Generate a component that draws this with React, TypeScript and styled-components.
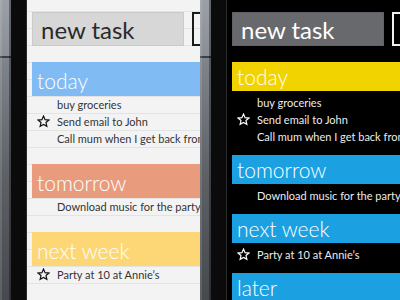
import React from 'react';
import styled, { createGlobalStyle } from 'styled-components';

const GlobalStyle = createGlobalStyle`
  html, body {
    margin: 0;
    padding: 0;
    width: 400px;
    height: 300px;
    overflow: hidden;
    background: #000;
  }
  * { box-sizing: border-box; }
`;

interface Theme {
  screen: string;
  lines: boolean;
  input: string;
  inputText: string;
  addBorder: string;
  text: string;
  star: string;
  headerHeight: number;
  headerGap: number;
  sectionGap: number;
  headerTop: number;
}

const light: Theme = {
  screen: '#f3f3f3',
  lines: true,
  input: '#d7d7d7',
  inputText: '#2a2a2a',
  addBorder: '#1a1a1a',
  text: '#333',
  star: '#111',
  headerHeight: 34,
  headerGap: 0,
  sectionGap: 17,
  headerTop: 2,
};

const dark: Theme = {
  screen: '#000',
  lines: false,
  input: '#67696c',
  inputText: '#fff',
  addBorder: '#f0f0f0',
  text: '#ececec',
  star: '#fff',
  headerHeight: 29,
  headerGap: 3,
  sectionGap: 10,
  headerTop: 0,
};

const Page = styled.div`
  display: flex;
  width: 400px;
  height: 300px;
  font-family: Lato, "Open Sans", sans-serif;
`;

const PhoneBody = styled.div`
  display: flex;
  width: 200px;
  height: 300px;
`;

const Bezel = styled.div`
  width: 11px;
  flex: none;
  background:
    linear-gradient(to right, rgba(255,255,255,0.12) 0 2px, transparent 2px 9px, rgba(0,0,0,0.35) 9px 11px),
    linear-gradient(to bottom, #9aa0a6 0, #8a8f95 56px, #3c3f43 56px, #3c3f43 58px, #80858b 58px, #5c6065 180px, #46494d 300px);
`;

const Rim = styled.div`
  width: 16px;
  flex: none;
  background: #0b0b0b;
  border-right: 1px solid #2a2a2a;
`;

const Screen = styled.div<{ $t: Theme }>`
  flex: 1;
  min-width: 0;
  overflow: hidden;
  padding: 12px 0 0 5px;
  background-color: ${p => p.$t.screen};
  background-image: ${p =>
    p.$t.lines
      ? 'repeating-linear-gradient(to bottom, transparent 0 11px, #e3e3e3 11px 12px, transparent 12px 17px)'
      : 'none'};
`;

const InputRow = styled.div`
  display: flex;
  gap: 8px;
  height: 34px;
  margin-bottom: 16px;
`;

const TaskInput = styled.div<{ $t: Theme }>`
  width: 152px;
  flex: none;
  background: ${p => p.$t.input};
  color: ${p => p.$t.inputText};
  font-size: 24px;
  line-height: 34px;
  padding-left: 8px;
  border: 1px solid rgba(0,0,0,0.06);
`;

const AddBox = styled.div<{ $t: Theme }>`
  width: 30px;
  flex: none;
  border: 2px solid ${p => p.$t.addBorder};
`;

const Section = styled.div<{ $t: Theme }>`
  margin-bottom: ${p => p.$t.sectionGap}px;
`;

const Header = styled.div<{ $t: Theme; $color: string }>`
  height: ${p => p.$t.headerHeight}px;
  margin-bottom: ${p => p.$t.headerGap}px;
  background: ${p => p.$color};
  color: #fff;
  font-size: 21px;
  font-weight: 300;
  line-height: ${p => p.$t.headerHeight}px;
  padding: ${p => p.$t.headerTop}px 0 0 5px;
  white-space: nowrap;
`;

const Item = styled.div<{ $t: Theme }>`
  display: flex;
  align-items: center;
  height: 17px;
  color: ${p => p.$t.text};
  font-size: 11px;
  white-space: nowrap;
`;

const StarSlot = styled.span`
  width: 25px;
  flex: none;
  display: flex;
  justify-content: center;
  padding-right: 2px;
`;

const Star = ({ color }: { color: string }) => (
  <svg width="13" height="13" viewBox="0 0 24 24">
    <polygon
      points="12,2 14.9,8.6 22,9.3 16.6,14 18.2,21 12,17.3 5.8,21 7.4,14 2,9.3 9.1,8.6"
      fill="none"
      stroke={color}
      strokeWidth="2.2"
      strokeLinejoin="miter"
    />
  </svg>
);

type Task = { text: string; starred?: boolean };
type Group = { title: string; tasks: Task[] };

const groups: Group[] = [
  {
    title: 'today',
    tasks: [
      { text: 'buy groceries' },
      { text: 'Send email to John', starred: true },
      { text: 'Call mum when I get back from' },
    ],
  },
  { title: 'tomorrow', tasks: [{ text: 'Download music for the party' }] },
  { title: 'next week', tasks: [{ text: 'Party at 10 at Annie\u2019s', starred: true }] },
  { title: 'later', tasks: [] },
];

const Phone = ({ theme, colors }: { theme: Theme; colors: string[] }) => (
  <PhoneBody>
    <Bezel />
    <Rim />
    <Screen $t={theme}>
      <InputRow>
        <TaskInput $t={theme}>new task</TaskInput>
        <AddBox $t={theme} />
      </InputRow>
      {groups.slice(0, colors.length).map((g, i) => (
        <Section key={g.title} $t={theme}>
          <Header $t={theme} $color={colors[i]}>{g.title}</Header>
          {g.tasks.map(task => (
            <Item key={task.text} $t={theme}>
              <StarSlot>{task.starred && <Star color={theme.star} />}</StarSlot>
              {task.text}
            </Item>
          ))}
        </Section>
      ))}
    </Screen>
  </PhoneBody>
);

export default function App() {
  return (
    <>
      <GlobalStyle />
      <Page>
        <Phone theme={light} colors={['#80bcf3', '#e99c7d', '#fdd775']} />
        <Phone theme={dark} colors={['#f1d300', '#1ba1e2', '#1ba1e2', '#1ba1e2']} />
      </Page>
    </>
  );
}
